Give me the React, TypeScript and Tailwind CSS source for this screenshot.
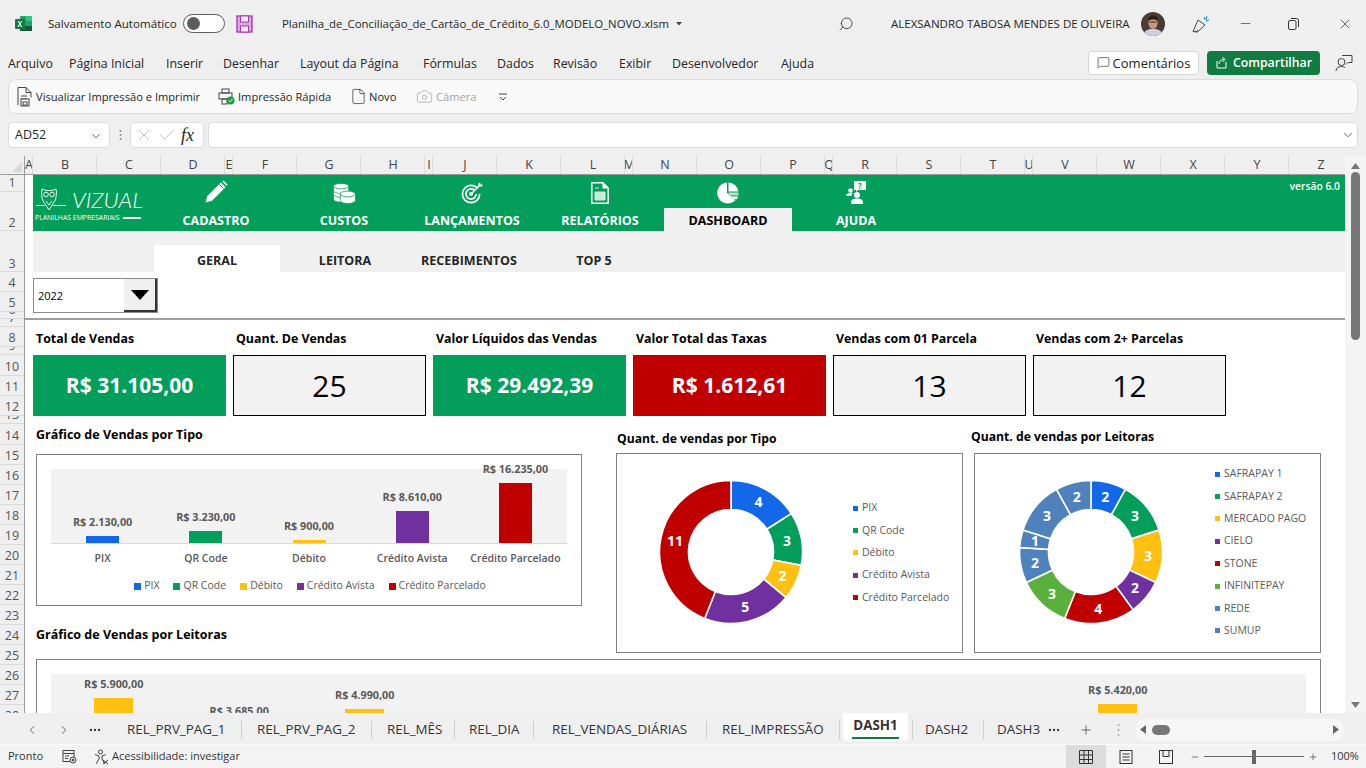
import React from 'react';
import { ChevronDown, ChevronLeft, ChevronRight, Search, Minus, X, Check, Plus, MoreHorizontal, MessageSquare, File, Camera } from 'lucide-react';

const cols: [string, string][] = [
  ['A', 'w-[8px]'], ['B', 'w-[64px]'], ['C', 'w-[64px]'], ['D', 'w-[64px]'], ['E', 'w-[8px]'], ['F', 'w-[64px]'], ['G', 'w-[64px]'], ['H', 'w-[64px]'], ['I', 'w-[8px]'],
  ['J', 'w-[64px]'], ['K', 'w-[64px]'], ['L', 'w-[64px]'], ['M', 'w-[8px]'], ['N', 'w-[64px]'], ['O', 'w-[64px]'], ['P', 'w-[64px]'], ['Q', 'w-[8px]'], ['R', 'w-[64px]'],
  ['S', 'w-[64px]'], ['T', 'w-[64px]'], ['U', 'w-[8px]'], ['V', 'w-[64px]'], ['W', 'w-[64px]'], ['X', 'w-[64px]'], ['Y', 'w-[64px]'], ['Z', 'w-[64px]'],
];
const rows: [string, string][] = [
  ['1', 'h-[17px]'], ['2', 'h-[39px] leading-[14px]'], ['3', 'h-[41px] leading-[14px]'], ['4', 'h-[20px]'], ['5', 'h-[20px]'], ['6', 'h-[7px]'], ['7', 'h-[8px]'], ['8', 'h-[20px]'], ['9', 'h-[8px]'],
  ['10', 'h-[21px]'], ['11', 'h-[20px]'], ['12', 'h-[20px]'], ['13', 'h-[8px]'], ['14', 'h-[21px]'], ['15', 'h-[20px]'], ['16', 'h-[20px]'], ['17', 'h-[20px]'], ['18', 'h-[20px]'],
  ['19', 'h-[20px]'], ['20', 'h-[20px]'], ['21', 'h-[20px]'], ['22', 'h-[20px]'], ['23', 'h-[20px]'], ['24', 'h-[20px]'], ['25', 'h-[20px]'], ['26', 'h-[20px]'], ['27', 'h-[20px]'], ['28', 'h-[20px]'],
];
const menu: [string, string][] = [
  ['Arquivo', 'w-[61px]'], ['Página Inicial', 'w-[97px]'], ['Inserir', 'w-[57px]'], ['Desenhar', 'w-[77px]'], ['Layout da Página', 'w-[123px]'], ['Fórmulas', 'w-[74px]'],
  ['Dados', 'w-[56px]'], ['Revisão', 'w-[66px]'], ['Exibir', 'w-[53px]'], ['Desenvolvedor', 'w-[109px]'], ['Ajuda', 'w-[60px]'],
];

const BLUE = '#1268e8';
const GREEN = '#029e5a';
const YELLOW = '#ffc012';
const PURPLE = '#7030a0';
const RED = '#c00000';
const LGREEN = '#5ab03c';
const STEEL = '#4f81bd';

function Donut({ values, colors }: { values: number[]; colors: string[] }) {
  const total = values.reduce((a, b) => a + b, 0);
  const R = 71.5, r = 42.5, c = 80;
  let acc = 0;
  const pt = (rad: number, a: number) => [c + rad * Math.sin(a), c - rad * Math.cos(a)];
  return (
    <svg width="160" height="160" viewBox="0 0 160 160" className="shrink-0">
      {values.map((v, i) => {
        const a0 = (acc / total) * Math.PI * 2;
        acc += v;
        const a1 = (acc / total) * Math.PI * 2;
        const [x0, y0] = pt(R, a0), [x1, y1] = pt(R, a1), [x2, y2] = pt(r, a1), [x3, y3] = pt(r, a0);
        const large = a1 - a0 > Math.PI ? 1 : 0;
        const [tx, ty] = pt((R + r) / 2, (a0 + a1) / 2);
        return (
          <g key={i}>
            <path d={`M${x0} ${y0}A${R} ${R} 0 ${large} 1 ${x1} ${y1}L${x2} ${y2}A${r} ${r} 0 ${large} 0 ${x3} ${y3}Z`} fill={colors[i]} stroke="#fff" strokeWidth="1.6" />
            <text x={tx} y={ty + 5} textAnchor="middle" fill="#fff" fontSize="14" fontWeight="700">{v}</text>
          </g>
        );
      })}
    </svg>
  );
}

function LegendRow({ label, color }: { label: string; color: string }) {
  return (
    <div className="flex h-[22.4px] items-center text-[10.5px] text-[#595959]">
      <svg width="5" height="5" className="mr-[4px] shrink-0"><rect width="5" height="5" fill={color} /></svg>
      {label}
    </div>
  );
}

function Bar({ label, color, h, w = 'w-[33px]' }: { label: string; color: string; h: string; w?: string }) {
  return (
    <div className="flex flex-1 flex-col items-center justify-end">
      <div className="mb-[7px] h-[14px] whitespace-nowrap text-[10.8px] font-bold leading-[14px] text-[#595959]">{label}</div>
      <svg className={`${w} ${h}`} preserveAspectRatio="none" viewBox="0 0 33 10"><rect width="33" height="10" fill={color} /></svg>
    </div>
  );
}

function Kpi({ text, kind }: { text: string; kind: 'green' | 'red' | 'gray' }) {
  if (kind === 'gray') {
    return <div className="flex h-[61px] w-[193px] items-center justify-center border border-black bg-[#f2f2f2] text-[30px] text-black">{text}</div>;
  }
  return (
    <div className={`flex h-[61px] w-[193px] items-center justify-center text-[21px] font-bold text-white ${kind === 'green' ? 'bg-[#029e5a]' : 'bg-[#c00000]'}`}>{text}</div>
  );
}

function NavItem({ icon, label, active }: { icon: React.ReactNode; label: string; active?: boolean }) {
  return (
    <div className="flex w-[128px] flex-col items-center">
      <div className="flex h-[33px] items-end justify-center pb-[4px]">{icon}</div>
      <div className={`flex h-[23px] w-full items-center justify-center pt-[4px] text-[12.5px] font-bold ${active ? 'bg-[#f0f0f0] text-black' : 'text-white'}`}>{label}</div>
    </div>
  );
}

const ExcelIcon = () => (
  <svg width="17" height="17" viewBox="0 0 17 17" className="shrink-0">
    <rect x="5" y="1" width="12" height="15" rx="1" fill="#21a366" />
    <rect x="11" y="1" width="6" height="5" fill="#33c481" />
    <rect x="11" y="6" width="6" height="5" fill="#21a366" />
    <rect x="5" y="11" width="12" height="5" fill="#185c37" />
    <rect x="0" y="4" width="10" height="10" rx="1" fill="#107c41" />
    <path d="M2.6 6l1.6 3-1.7 3h1.3l1.1-2.1L6 12h1.3L5.6 9l1.6-3H6L5 7.9 4 6z" fill="#fff" />
  </svg>
);

const SaveIcon = () => (
  <svg width="17" height="18" viewBox="0 0 17 18" className="shrink-0">
    <rect x="1" y="1" width="15" height="16" fill="#d8a9de" stroke="#a63eb0" strokeWidth="1.4" />
    <rect x="4.5" y="1" width="8" height="6" fill="#f7eaf8" stroke="#a63eb0" />
    <rect x="4.5" y="11" width="8" height="6" fill="#f7eaf8" stroke="#a63eb0" />
  </svg>
);

const Avatar = () => (
  <svg width="24" height="24" viewBox="0 0 24 24" className="shrink-0">
    <clipPath id="avc"><circle cx="12" cy="12" r="12" /></clipPath>
    <g clipPath="url(#avc)">
      <rect width="24" height="24" fill="#4a3b33" />
      <path d="M2 24c1-6 5-7 10-7s9 1 10 7z" fill="#ccd0dc" />
      <ellipse cx="12" cy="11" rx="4.6" ry="6" fill="#c89a80" />
      <path d="M7 9c0-4 2.5-5.500 5-5.500S17 5 17 9c-1.500-2-8-2-10 0z" fill="#2a1e18" />
      <rect x="8.500" y="9.500" width="7" height="1" fill="#3a2a22" />
    </g>
  </svg>
);

const SheetIcons = {
  pencil: (
    <svg width="24" height="24" viewBox="0 0 24 24">
      <path d="M1.500 22.500l1.800-6.500L16.800 2.500l4.700 4.700L8 20.700z" fill="#fff" />
      <path d="M18 1.300l1.500-.8 4 4-.8 1.500z" fill="#fff" />
      <path d="M15.500 4.500l4 4" stroke="#029e5a" strokeWidth="1" />
    </svg>
  ),
  coins: (
    <svg width="24" height="21" viewBox="0 0 24 22">
      <g fill="#fff" stroke="#029e5a" strokeWidth="0.8">
        <path d="M1 11v6c0 1.500 3 3 7 3h2v-9z" />
        <path d="M1 7v5c0 1.500 3.500 3 8 3s8-1.500 8-3V7z" />
        <path d="M1 3v5c0 1.500 3.500 3 8 3s8-1.500 8-3V3z" />
        <ellipse cx="9" cy="3.200" rx="8" ry="2.800" />
        <path d="M8 12v6c0 1.800 3.500 3.500 8 3.500s8-1.700 8-3.500v-6z" />
        <ellipse cx="16" cy="11.500" rx="8" ry="3" />
      </g>
    </svg>
  ),
  target: (
    <svg width="22" height="22" viewBox="0 0 23 23">
      <g fill="none" stroke="#fff" strokeWidth="1.800">
        <circle cx="10.500" cy="12.500" r="9" strokeDasharray="50 6" />
        <circle cx="10.500" cy="12.500" r="5.300" strokeDasharray="28 5" />
      </g>
      <circle cx="10.500" cy="12.500" r="2" fill="#fff" />
      <path d="M10.500 12.500L20 3" stroke="#fff" strokeWidth="1.500" />
      <path d="M18 1.500l.5 3 3 .5 1.500-2-2.500-.5-.5-2z" fill="#fff" />
    </svg>
  ),
  doc: (
    <svg width="18" height="22" viewBox="0 0 18 22">
      <path d="M.8.800h11L17.200 6v15.200H.8z" fill="none" stroke="#fff" strokeWidth="1.500" />
      <path d="M11.500 1v5.500h5.500z" fill="#fff" />
      <path d="M4 6h4M4 10h10v8H4z" stroke="#fff" fill="#a6dcc2" strokeWidth="0.800" />
      <path d="M4 12h10M4 14h10M4 16h10" stroke="#fff" strokeWidth="0.800" />
    </svg>
  ),
  pie: (
    <svg width="22" height="22" viewBox="0 0 22 22">
      <path d="M10 .500A10.500 10.500 0 1 0 18.500 18L10 11z" fill="#fff" />
      <path d="M11.500 .500A10.500 10.500 0 0 1 21.500 9.500H11.500z" fill="#fff" />
      <rect x="11.500" y="10.500" width="10" height="3" fill="#b8e3cd" />
      <path d="M12 14.500h9.300A10.500 10.500 0 0 1 19.500 17.500z" fill="#fff" />
    </svg>
  ),
  help: (
    <svg width="20" height="23" viewBox="0 0 20 23">
      <path d="M8 0h12v9h-8l-2 2V9H8z" fill="#fff" />
      <text x="14" y="7.500" textAnchor="middle" fontSize="8" fontWeight="700" fill="#029e5a">?</text>
      <circle cx="4.500" cy="9.500" r="2.300" fill="#fff" />
      <path d="M0 15c0-2 2-3 4.500-3 1 0 2 .2 2.500.6C6 13.500 5 14.500 5 15z" fill="#fff" />
      <circle cx="11" cy="14" r="3" fill="#fff" />
      <path d="M5 23v-2c0-2.500 3-3.500 6-3.500s6 1 6 3.500v2z" fill="#fff" />
    </svg>
  ),
};

const typeColors = [BLUE, GREEN, YELLOW, PURPLE, RED];
const readerColors = [BLUE, GREEN, YELLOW, PURPLE, RED, LGREEN, STEEL, STEEL, STEEL, STEEL];

function Sep() {
  return <div className="h-[18px] w-px shrink-0 bg-[#cfcfcf]" />;
}

export default function App() {
  return (
    <div className="flex h-[768px] w-[1366px] flex-col overflow-hidden bg-[#efefef] font-['Open_Sans',sans-serif] text-[#262626]">
      {/* Title bar */}
      <div className="flex h-[46px] shrink-0 items-center pt-[1px] text-[11.5px]">
        <div className="ml-[15px] w-[33px]"><ExcelIcon /></div>
        <div className="w-[135px] whitespace-nowrap text-[11.6px]">Salvamento Automático</div>
        <div className="flex h-[19px] w-[42px] items-center rounded-full border border-[#5c5c5c] bg-white pl-[3px]">
          <div className="h-[13px] w-[13px] rounded-full bg-[#5c5c5c]" />
        </div>
        <div className="ml-[11px] w-[46px]"><SaveIcon /></div>
        <div className="w-[397px] whitespace-nowrap text-[11.4px]">Planilha_de_Conciliação_de_Cartão_de_Crédito_6.0_MODELO_NOVO.xlsm</div>
        <svg width="6" height="4" viewBox="0 0 6 4" className="ml-[-3px]"><path d="M0 0h6L3 3.500z" fill="#444" /></svg>
        <Search size={16} strokeWidth={1.2} className="ml-[156px] -scale-x-100" />
        <div className="ml-[37px] w-[250px] whitespace-nowrap text-[11.5px]">ALEXSANDRO TABOSA MENDES DE OLIVEIRA</div>
        <Avatar />
        <svg width="18" height="18" viewBox="0 0 18 18" className="ml-[27px]" fill="none">
          <path d="M1 16.500L6 5l7 5-7.500 7z" stroke="#444" strokeWidth="1" />
          <path d="M3 16c1.500 1.500 3 .5 3-1" stroke="#444" />
          <path d="M12 2.500l1 2M15 1.500l-1 3M17 5l-3 1" stroke="#1a86d0" strokeWidth="1.200" />
        </svg>
        <Minus size={15} strokeWidth={1} className="ml-[28px]" />
        <svg width="11" height="12" viewBox="0 0 11 12" className="ml-[35px]" fill="none" stroke="#333"><rect x=".5" y="2.500" width="7.500" height="9" rx="1.500" /><path d="M3 .5h5.500a2 2 0 0 1 2 2V9" /></svg>
        <X size={16} strokeWidth={1} className="ml-[38px]" />
      </div>

      {/* Menu bar */}
      <div className="flex h-[33px] shrink-0 items-center pl-[8px] text-[12.4px]">
        {menu.map(([m, w]) => <div key={m} className={`${w} whitespace-nowrap pt-[3px]`}>{m}</div>)}
        <div className="ml-[247px] flex h-[24px] w-[111px] items-center justify-center gap-[3px] rounded-[4px] border border-[#d6d6d6] bg-white">
          <MessageSquare size={13} strokeWidth={1.2} /><span className="pt-[2px] text-[13px] text-[#222]">Comentários</span>
        </div>
        <div className="ml-[8px] flex h-[24px] w-[113px] items-center justify-center gap-[5px] rounded-[4px] bg-[#107c41] text-white">
          <svg width="13" height="13" viewBox="0 0 13 13" fill="none" stroke="#fff"><path d="M2 5v7h9V6M4 8c0-3 2-4.500 5-4.500M7.500 1L10 3.500 7.500 6" /></svg>
          <span className="pt-[2px] text-[12.3px] font-semibold">Compartilhar</span>
        </div>
        <svg width="18" height="18" viewBox="0 0 18 18" className="ml-[15px]" fill="none" stroke="#444"><circle cx="6.500" cy="8" r="3.500" /><path d="M1 17c0-3 2.500-4.500 5.500-4.500 1.500 0 2.500.3 3.500 1M7 1.500h10v7h-4l-2 2" /></svg>
      </div>

      {/* Quick access */}
      <div className="mx-[8px] flex h-[35px] shrink-0 items-center rounded-lg border border-[#dcdcdc] bg-[#f9f9f9] pl-[8px] text-[11.15px]">
        <svg width="16" height="20" viewBox="0 0 16 20" fill="none" stroke="#444" className="mr-[3px]"><path d="M1 .5h8l5 5v5M9 .5v5h5M1 .5V18M4 9h6M4 12h6" /><rect x="4" y="12" width="8" height="7" fill="#f9f9f9" /><rect x="6" y="15" width="4" height="3" /></svg>
        <div className="w-[182px] whitespace-nowrap pt-px">Visualizar Impressão e Imprimir</div>
        <svg width="17" height="17" viewBox="0 0 17 17" fill="none" stroke="#444" className="mr-[3px]"><rect x="1" y="5" width="13" height="6" /><rect x="4" y="1" width="7" height="4" /><rect x="4" y="11" width="5" height="5" /><circle cx="12.500" cy="12.500" r="4" fill="#1b9e4b" stroke="none" /><path d="M10.500 12.500l1.500 1.500 2.500-3" stroke="#fff" /></svg>
        <div className="w-[112px] whitespace-nowrap pt-px">Impressão Rápida</div>
        <File size={17} strokeWidth={1} className="mr-[2px]" />
        <div className="w-[47px] whitespace-nowrap pt-px">Novo</div>
        <Camera size={17} strokeWidth={1} className="mr-[3px] text-[#a0a0a0]" />
        <div className="w-[63px] whitespace-nowrap pt-px text-[#a6a6a6]">Câmera</div>
        <svg width="8" height="8" viewBox="0 0 8 8" fill="none" stroke="#444"><path d="M0 1h8M1 4l3 3 3-3" /></svg>
      </div>

      {/* Formula bar */}
      <div className="mt-[8px] flex h-[26px] shrink-0 items-stretch pl-[8px] pr-[8px] text-[12.5px]">
        <div className="flex w-[102px] items-center justify-between rounded-[4px] border border-[#dcdcdc] bg-white px-[6px] pt-px">
          <span>AD52</span><ChevronDown size={14} strokeWidth={1.2} />
        </div>
        <div className="flex w-[20px] items-center justify-center"><svg width="3" height="12" fill="#888"><circle cx="1.500" cy="2" r="1" /><circle cx="1.500" cy="6" r="1" /><circle cx="1.500" cy="10" r="1" /></svg></div>
        <div className="flex w-[74px] items-center gap-[4px] rounded-[4px] border border-[#dcdcdc] bg-white pl-[4px]">
          <X size={18} strokeWidth={1} className="text-[#b0b0b0]" />
          <Check size={20} strokeWidth={1} className="text-[#b0b0b0]" />
          <span className="font-['Liberation_Serif',serif] text-[18px] italic">fx</span>
        </div>
        <div className="ml-[4px] flex flex-1 items-center justify-end rounded-[4px] border border-[#dcdcdc] bg-white pr-[2px]">
          <ChevronDown size={14} strokeWidth={1.2} />
        </div>
      </div>

      {/* Grid + scrollbar */}
      <div className="mt-[8px] flex h-[557px] shrink-0">
        <div className="flex w-[1345px] flex-col overflow-hidden">
          {/* Column headers */}
          <div className="flex h-[19px] shrink-0 border-b border-[#9c9c9c] text-[12.5px] text-[#444]">
            <div className="relative w-[25px] shrink-0 border-r border-[#9c9c9c]">
              <svg width="10" height="10" className="absolute bottom-[2px] right-[2px]"><path d="M10 0v10H0z" fill="#d8d8d8" /></svg>
            </div>
            {cols.map(([c, w]) => (
              <div key={c} className={`${w} flex shrink-0 items-center justify-center overflow-hidden border-r border-[#dcdcdc] pl-[1px] pt-[1px]`}>{c}</div>
            ))}
          </div>
          <div className="flex h-[538px] overflow-hidden bg-white">
            {/* Row headers */}
            <div className="w-[25px] shrink-0 border-r border-[#9c9c9c] bg-[#efefef] text-[12.5px] leading-[17px] text-[#555]">
              {rows.map(([r, h]) => (
                <div key={r} className={`${h} flex items-end justify-center overflow-hidden border-b border-[#dadada] ${r === '6' ? 'border-[#9c9c9c]' : ''}`}>{r}</div>
              ))}
            </div>

            {/* Sheet */}
            <div className="flex w-[1320px] flex-col bg-white text-black">
              {/* Green nav */}
              <div className="ml-[8px] flex h-[56px] shrink-0 bg-[#029e5a]">
                <div className="w-[119px] shrink-0 pl-[2px] text-white">
                  <div className="flex h-[39px] items-start pt-[11px]">
                    <svg width="36" height="28" viewBox="0 0 36 28" fill="none" stroke="#fff" strokeWidth="0.900" className="shrink-0">
                      <path d="M7 3l4 1.500h6L21 3c1 4 0 8-.5 11L14 24l-6.500-10C7 11 6 7 7 3z" />
                      <circle cx="11" cy="8.500" r="2.300" /><circle cx="17" cy="8.500" r="2.300" />
                      <path d="M1 19.500h9M18 19.500h13" />
                      <path d="M11 15l3 4 3-4" />
                    </svg>
                    <span className="ml-[1px] font-['Lato',sans-serif] text-[22.5px] font-light italic leading-[28px]">VIZUAL</span>
                  </div>
                  <div className="flex h-[8px] items-center">
                    <span className="whitespace-nowrap text-[6.9px]">PLANILHAS EMPRESARIAIS</span>
                    <div className="ml-[4px] h-[2px] w-[18px] bg-white" />
                  </div>
                </div>
                <NavItem icon={SheetIcons.pencil} label="CADASTRO" />
                <NavItem icon={SheetIcons.coins} label="CUSTOS" />
                <NavItem icon={SheetIcons.target} label="LANÇAMENTOS" />
                <NavItem icon={SheetIcons.doc} label="RELATÓRIOS" />
                <NavItem icon={SheetIcons.pie} label="DASHBOARD" active />
                <NavItem icon={SheetIcons.help} label="AJUDA" />
                <div className="ml-auto pr-[5px] pt-[4px] text-[10.3px] font-semibold text-white">versão 6.0</div>
              </div>

              {/* Sub tabs */}
              <div className="ml-[8px] flex h-[41px] shrink-0 items-end bg-[#f0f0f0] pl-[121px] text-[12.5px] font-bold text-[#262626]">
                <div className="flex h-[27px] w-[126px] items-center justify-center bg-white pt-[5px]">GERAL</div>
                <div className="flex h-[27px] w-[130px] items-center justify-center pt-[5px]">LEITORA</div>
                <div className="flex h-[27px] w-[118px] items-center justify-center pt-[5px]">RECEBIMENTOS</div>
                <div className="flex h-[27px] w-[132px] items-center justify-center pt-[5px]">TOP 5</div>
              </div>

              {/* Year selector */}
              <div className="h-[48px] shrink-0 border-b-2 border-[#a0a0a0] pl-[8px] pt-[6px]">
                <div className="flex h-[35px] w-[125px] border border-[#8a8a8a]">
                  <div className="flex flex-1 items-center pl-[4px] pt-[1px] text-[11px]">2022</div>
                  <div className="flex w-[33px] items-center justify-center border-b-2 border-r-2 border-[#333] bg-[#f0f0f0]">
                    <svg width="18" height="10" viewBox="0 0 18 10"><path d="M0 0h18L9 10z" fill="#000" /></svg>
                  </div>
                </div>
              </div>

              {/* KPI labels */}
              <div className="ml-[11px] flex h-[35px] shrink-0 pt-[10px] text-[12.4px] font-bold leading-[18px]">
                <div className="w-[200px]">Total de Vendas</div>
                <div className="w-[200px]">Quant. De Vendas</div>
                <div className="w-[200px]">Valor Líquidos das Vendas</div>
                <div className="w-[200px]">Valor Total das Taxas</div>
                <div className="w-[200px]">Vendas com 01 Parcela</div>
                <div className="w-[200px]">Vendas com 2+ Parcelas</div>
              </div>

              {/* KPI cards */}
              <div className="ml-[8px] flex shrink-0 gap-[7px]">
                <Kpi text="R$ 31.105,00" kind="green" />
                <Kpi text="25" kind="gray" />
                <Kpi text="R$ 29.492,39" kind="green" />
                <Kpi text="R$ 1.612,61" kind="red" />
                <Kpi text="13" kind="gray" />
                <Kpi text="12" kind="gray" />
              </div>

              {/* Charts row */}
              <div className="flex h-[243px] shrink-0 text-[12.2px] font-bold">
                <div className="ml-[11px] w-[546px] pt-[10px] text-[12.5px]">
                  <div className="h-[18px] leading-[18px]">Gráfico de Vendas por Tipo</div>
                  <div className="mt-[10px] h-[152px] border border-[#7f7f7f] px-[14px] pt-[14px] font-normal">
                    <div className="flex h-[75px] items-end border-b border-[#d9d9d9] bg-[#f2f2f2]">
                      <Bar label="R$ 2.130,00" color={BLUE} h="h-[7px]" />
                      <Bar label="R$ 3.230,00" color={GREEN} h="h-[12px]" />
                      <Bar label="R$ 900,00" color={YELLOW} h="h-[3px]" />
                      <Bar label="R$ 8.610,00" color={PURPLE} h="h-[32px]" />
                      <Bar label="R$ 16.235,00" color={RED} h="h-[60px]" />
                    </div>
                    <div className="flex h-[29px] items-center text-[10.5px] font-semibold text-[#595959]">
                      <div className="flex-1 text-center">PIX</div>
                      <div className="flex-1 text-center">QR Code</div>
                      <div className="flex-1 text-center">Débito</div>
                      <div className="flex-1 text-center">Crédito Avista</div>
                      <div className="flex-1 text-center">Crédito Parcelado</div>
                    </div>
                    <div className="mt-[3px] flex h-[20px] items-center justify-center gap-[14px] pl-[2px] text-[10.5px] text-[#595959]">
                      {['PIX', 'QR Code', 'Débito', 'Crédito Avista', 'Crédito Parcelado'].map((l, i) => (
                        <div key={l} className="flex items-center whitespace-nowrap">
                          <svg width="7" height="7" className="mr-[3px]"><rect width="7" height="7" fill={typeColors[i]} /></svg>{l}
                        </div>
                      ))}
                    </div>
                  </div>
                  <div className="mt-[20px] h-[18px] leading-[18px]">Gráfico de Vendas por Leitoras</div>
                </div>

                <div className="ml-[34px] w-[347px] pt-[14px]">
                  <div className="h-[18px] pl-[1px] leading-[18px]">Quant. de vendas por Tipo</div>
                  <div className="mt-[5px] flex h-[200px] items-start border border-[#7f7f7f] font-normal">
                    <div className="ml-[34px] mt-[18px]"><Donut values={[4, 3, 2, 5, 11]} colors={typeColors} /></div>
                    <div className="ml-[42px] mt-[43px]">
                      {['PIX', 'QR Code', 'Débito', 'Crédito Avista', 'Crédito Parcelado'].map((l, i) => <LegendRow key={l} label={l} color={typeColors[i]} />)}
                    </div>
                  </div>
                </div>

                <div className="ml-[8px] w-[350px] pt-[12px]">
                  <div className="h-[18px] leading-[18px]">Quant. de vendas por Leitoras</div>
                  <div className="ml-[3px] mt-[7px] flex h-[200px] w-[347px] items-start border border-[#7f7f7f] font-normal">
                    <div className="ml-[36px] mt-[18px]"><Donut values={[2, 3, 3, 2, 4, 3, 2, 1, 3, 2]} colors={readerColors} /></div>
                    <div className="ml-[44px] mt-[9px]">
                      {['SAFRAPAY 1', 'SAFRAPAY 2', 'MERCADO PAGO', 'CIELO', 'STONE', 'INFINITEPAY', 'REDE', 'SUMUP'].map((l, i) => <LegendRow key={l} label={l} color={readerColors[i]} />)}
                    </div>
                  </div>
                </div>
              </div>

              {/* Second bar chart (cut off by the viewport) */}
              <div className="ml-[11px] h-[150px] w-[1285px] shrink-0 border border-[#7f7f7f] px-[14px] pt-[14px]">
                <div className="flex h-[95px] items-end bg-[#f2f2f2]">
                  <Bar label="R$ 5.900,00" color={YELLOW} h="h-[71px]" w="w-[39px]" />
                  <Bar label="R$ 3.685,00" color={YELLOW} h="h-[44px]" w="w-[39px]" />
                  <Bar label="R$ 4.990,00" color={YELLOW} h="h-[60px]" w="w-[39px]" />
                  <div className="flex-1" />
                  <div className="flex-1" />
                  <Bar label="R$ 3.080,00" color={YELLOW} h="h-[37px]" w="w-[39px]" />
                  <div className="flex-1" />
                  <div className="flex-1" />
                  <Bar label="R$ 5.420,00" color={YELLOW} h="h-[65px]" w="w-[39px]" />
                  <div className="flex-1" />
                </div>
              </div>
            </div>
          </div>
        </div>

        {/* Vertical scrollbar */}
        <div className="flex w-[21px] shrink-0 flex-col items-center bg-[#f4f4f4] pt-[7px]">
          <svg width="9" height="6" viewBox="0 0 9 6"><path d="M4.500 0L9 6H0z" fill="#777" /></svg>
          <div className="mt-[3px] h-[168px] w-[9px] rounded-full bg-[#777]" />
          <svg width="9" height="6" viewBox="0 0 9 6" className="mt-[362px]"><path d="M4.500 6L9 0H0z" fill="#777" /></svg>
        </div>
      </div>

      {/* Sheet tabs */}
      <div className="flex h-[31px] shrink-0 items-center pt-[2px] text-[13.4px] text-[#333]">
        <ChevronLeft size={14} strokeWidth={1.2} className="ml-[25px]" />
        <ChevronRight size={14} strokeWidth={1.2} className="ml-[18px]" />
        <MoreHorizontal size={14} strokeWidth={2} className="ml-[17px]" />
        <div className="ml-[25px] w-[114px] whitespace-nowrap">REL_PRV_PAG_1</div><Sep />
        <div className="ml-[15px] w-[114px] whitespace-nowrap">REL_PRV_PAG_2</div><Sep />
        <div className="ml-[15px] w-[67px] whitespace-nowrap">REL_MÊS</div><Sep />
        <div className="ml-[14px] w-[64px] whitespace-nowrap">REL_DIA</div><Sep />
        <div className="ml-[18px] w-[154px] whitespace-nowrap">REL_VENDAS_DIÁRIAS</div><Sep />
        <div className="ml-[15px] w-[117px] whitespace-nowrap">REL_IMPRESSÃO</div><Sep />
        <div className="-mt-[2px] ml-[3px] flex h-[28px] w-[65px] flex-col items-center justify-center self-start rounded-b-[4px] bg-white font-bold">
          <span>DASH1</span>
          <div className="mt-[1px] h-[2px] w-[47px] bg-[#107c41]" />
        </div>
        <div className="ml-[4px]"><Sep /></div>
        <div className="ml-[12px] w-[58px] whitespace-nowrap">DASH2</div><Sep />
        <div className="ml-[13px] w-[43px] overflow-hidden whitespace-nowrap">DASH3</div>
        <MoreHorizontal size={14} strokeWidth={2} className="ml-[7px]" />
        <Plus size={14} strokeWidth={1.2} className="ml-[18px]" />
        <svg width="3" height="14" className="ml-[24px]" fill="#aaa"><circle cx="1.500" cy="2" r="1" /><circle cx="1.500" cy="7" r="1" /><circle cx="1.500" cy="12" r="1" /></svg>
        <div className="ml-[15px] flex h-[22px] w-[209px] items-center rounded-full bg-[#f6f6f6] pl-[5px]">
          <svg width="6" height="9" viewBox="0 0 6 9"><path d="M6 0v9L0 4.500z" fill="#666" /></svg>
          <div className="ml-[6px] h-[10px] w-[18px] rounded-full bg-[#777]" />
          <svg width="6" height="9" viewBox="0 0 6 9" className="ml-auto mr-[5px]"><path d="M0 0v9l6-4.500z" fill="#666" /></svg>
        </div>
      </div>

      {/* Status bar */}
      <div className="flex h-[24px] shrink-0 items-center border-t border-[#fafafa] bg-[#f3f3f3] text-[11px] text-[#333]">
        <div className="ml-[8px] w-[54px]">Pronto</div>
        <svg width="15" height="15" viewBox="0 0 15 15" fill="none" stroke="#444"><rect x="1" y="1.500" width="11" height="11" /><path d="M1 4.500h11M3 7h4M3 9.500h3" /><circle cx="11" cy="11" r="3" fill="#f3f3f3" /><circle cx="11" cy="11" r="1" fill="#444" /></svg>
        <svg width="15" height="16" viewBox="0 0 15 16" fill="none" stroke="#444" className="ml-[17px]"><circle cx="6.500" cy="3" r="2" /><path d="M1 5.500l4 1.500v3l-3 5M12 5.500L8 7v3l3 5M9 11l5 4M14 11l-5 4" /></svg>
        <div className="ml-[3px] w-[954px] whitespace-nowrap text-[11px]">Acessibilidade: investigar</div>
        <div className="flex h-[23px] w-[40px] items-center justify-center bg-[#dcdcdc]">
          <svg width="14" height="14" viewBox="0 0 14 14" fill="none" stroke="#333"><path d="M.5.500h13v13H.5zM.5 5h13M.5 9.500h13M5 .5v13M9.500 .5v13" /></svg>
        </div>
        <svg width="14" height="14" viewBox="0 0 14 14" fill="none" stroke="#333" className="ml-[13px]"><rect x="1" y=".5" width="12" height="13" /><path d="M3.500 4h7M3.500 7h7M3.500 10h7" /></svg>
        <svg width="14" height="14" viewBox="0 0 14 14" fill="none" stroke="#333" className="ml-[26px]"><rect x=".5" y=".5" width="13" height="13" /><path d="M4 .5v6h6v-6" /></svg>
        <Minus size={10} className="ml-[17px]" strokeWidth={1.5} />
        <div className="ml-[4px] flex w-[100px] items-center">
          <div className="h-px flex-1 bg-[#666]" />
          <div className="h-[14px] w-[4px] bg-[#666]" />
          <div className="h-px flex-1 bg-[#666]" />
        </div>
        <Plus size={10} className="ml-[4px]" strokeWidth={1.5} />
        <div className="ml-[13px]">100%</div>
      </div>
    </div>
  );
}
